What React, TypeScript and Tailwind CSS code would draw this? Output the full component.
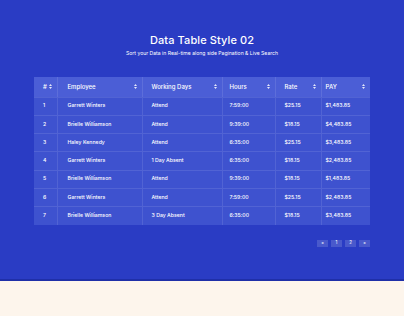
import React from "react";

const rows = [
  ["1", "Garrett Winters", "Attend", "7:59:00", "$25.15", "$1,483.85"],
  ["2", "Brielle Williamson", "Attend", "9:39:00", "$18.15", "$4,483.85"],
  ["3", "Haley Kennedy", "Attend", "6:35:00", "$25.15", "$3,483.85"],
  ["4", "Garrett Winters", "1 Day Absent", "6:35:00", "$18.15", "$2,483.85"],
  ["5", "Brielle Williamson", "Attend", "9:39:00", "$18.15", "$1,483.85"],
  ["6", "Garrett Winters", "Attend", "7:59:00", "$25.15", "$2,483.85"],
  ["7", "Brielle Williamson", "3 Day Absent", "6:35:00", "$18.15", "$3,483.85"],
];

const Sort = () => (
  <svg width="3" height="5" viewBox="0 0 3 5" className="shrink-0">
    <path d="M1.5 0 L3 2 L0 2 Z" fill="rgba(255,255,255,0.85)" />
    <path d="M1.5 5 L3 3 L0 3 Z" fill="rgba(255,255,255,0.85)" />
  </svg>
);

const headers: [string, number, string][] = [
  ["#", 23, "pl-[9px]"],
  ["Employee", 85, "pl-[10px]"],
  ["Working Days", 80, "pl-[9px]"],
  ["Hours", 53, "pl-[7px]"],
  ["Rate", 46, "pl-[9px]"],
  ["PAY", 49, "pl-[4px]"],
];

export default function App() {
  return (
    <div className="w-[404px] h-[316px] overflow-hidden flex flex-col" style={{ fontFamily: "Inter, 'Noto Sans', sans-serif" }}>
      <div className="h-[279px] bg-[#2a3cc4] flex flex-col items-center shrink-0">
        <div className="mt-[33px] text-white text-[11px] leading-[14px] font-medium tracking-[0.1px]">Data Table Style 02</div>
        <div className="mt-[3px] text-white text-[5.1px] leading-[7px]">Sort your Data in Real-time along side Pagination &amp; Live Search</div>
        <div className="mt-[20px] w-[336px] bg-[#3e52cf]">
          <table className="w-full border-collapse table-fixed text-white">
            <colgroup>
              {headers.map(([h, w]) => (
                <col key={h} style={{ width: w }} />
              ))}
            </colgroup>
            <thead>
              <tr className="bg-[#4b5ed6] h-[20px]">
                {headers.map(([h, , pl], i) => (
                  <th key={h} className={`p-0 text-left font-medium text-[6px] ${pl} pr-[5px] ${i < headers.length - 1 ? "border-r border-white/10" : ""}`}>
                    <div className="flex items-center justify-between">
                      <span>{h}</span>
                      <Sort />
                    </div>
                  </th>
                ))}
              </tr>
            </thead>
            <tbody>
              {rows.map((r, ri) => (
                <tr key={ri} className="h-[18.3px] border-t border-white/10">
                  {r.map((c, ci) => (
                    <td
                      key={ci}
                      className={`p-0 text-[5.2px] font-medium ${headers[ci][2]} ${ci < r.length - 1 ? "border-r border-white/10" : ""}`}
                    >
                      {c}
                    </td>
                  ))}
                </tr>
              ))}
            </tbody>
          </table>
        </div>
        <div className="mt-[15px] w-[336px] flex justify-end gap-[3px] text-white text-[4.5px]">
          {["«", "1", "2", "»"].map((p) => (
            <div key={p} className="w-[11px] h-[7px] bg-white/15 flex items-center justify-center leading-none">
              {p}
            </div>
          ))}
        </div>
      </div>
      <div className="h-[2px] bg-[#1f2fa8] shrink-0" />
      <div className="flex-1 bg-[#fdf5ec]" />
    </div>
  );
}
